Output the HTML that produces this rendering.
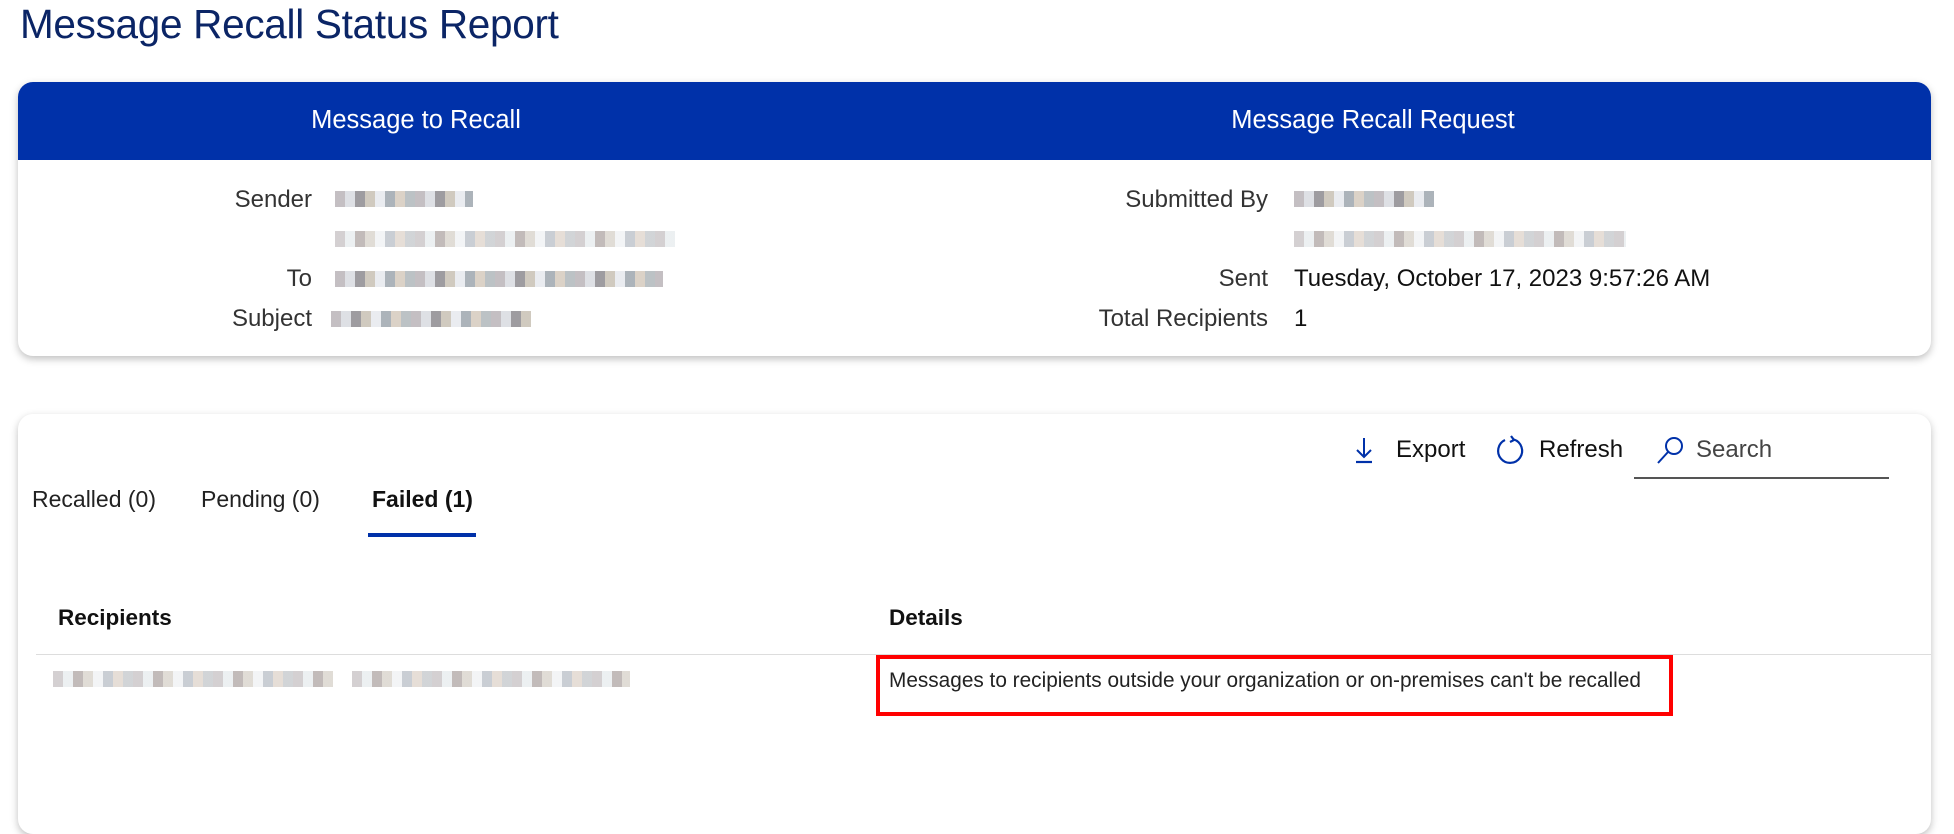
<!DOCTYPE html>
<html><head><meta charset="utf-8">
<style>
*{box-sizing:border-box;margin:0;padding:0}
body{width:1954px;height:778px;overflow:hidden;background:#fff;font-family:"Liberation Sans",sans-serif;position:relative;color:#222}
.abs{position:absolute;white-space:nowrap}
h1{position:absolute;left:20px;top:1px;font-size:40.5px;font-weight:normal;color:#0b2566;letter-spacing:-0.3px}
.card{position:absolute;left:18px;width:1913px;background:#fff;border-radius:15px;box-shadow:0 3px 8px rgba(0,0,0,.25)}
.c1{top:82px;height:274px;overflow:hidden}
.hdr{position:absolute;left:0;top:0;width:100%;height:78px;background:#0031a9}
.hdr span{position:absolute;top:24px;font-size:25.5px;color:#fff;transform:translateX(-50%)}
.lbl{position:absolute;font-size:24px;color:#333;text-align:right}
.val{position:absolute;font-size:24px;color:#111}
.blur{position:absolute;height:16px;background:repeating-linear-gradient(90deg,#b9b4b8 0 10px,#d8dbe0 10px 20px,#8d8a8f 20px 30px,#c8c0b4 30px 40px,#e6e9ee 40px 50px,#9ea6ae 50px 60px,#d5cabd 60px 70px,#b0b7bb 70px 80px);opacity:.85}
.blur.b2{background:repeating-linear-gradient(90deg,#c9c4c6 0 10px,#e8ecee 10px 20px,#b3aaa8 20px 30px,#d9d4cc 30px 40px,#f0f2f4 40px 50px,#bcc2c9 50px 60px,#e0d6cd 60px 70px,#c6cacd 70px 80px);opacity:.8}
.c2{top:414px;height:420px}
.tb{position:absolute;font-size:24px;color:#111}
.tab{position:absolute;top:486px;font-size:23px;color:#222}
</style></head><body>
<h1>Message Recall Status Report</h1>

<div class="card c1">
  <div class="hdr"><span style="left:398px">Message to Recall</span><span style="left:1355px">Message Recall Request</span></div>
</div>
<div class="lbl abs" style="left:150px;width:162px;top:186px">Sender</div>
<div class="blur" style="left:335px;top:191px;width:138px"></div>
<div class="blur b2" style="left:335px;top:231px;width:340px"></div>
<div class="lbl abs" style="left:150px;width:162px;top:265px">To</div>
<div class="blur" style="left:335px;top:271px;width:328px"></div>
<div class="lbl abs" style="left:150px;width:162px;top:305px">Subject</div>
<div class="blur" style="left:331px;top:311px;width:200px"></div>

<div class="lbl abs" style="left:1000px;width:268px;top:186px">Submitted By</div>
<div class="blur" style="left:1294px;top:191px;width:140px"></div>
<div class="blur b2" style="left:1294px;top:231px;width:332px"></div>
<div class="lbl abs" style="left:1000px;width:268px;top:265px">Sent</div>
<div class="val abs" style="left:1294px;top:265px">Tuesday, October 17, 2023 9:57:26 AM</div>
<div class="lbl abs" style="left:1000px;width:268px;top:305px">Total Recipients</div>
<div class="val abs" style="left:1294px;top:305px">1</div>

<div class="card c2"></div>
<svg class="abs" style="left:1354px;top:437px" width="20" height="27" viewBox="0 0 20 27"><path d="M10 1V20M3 13l7 7 7-7" fill="none" stroke="#0031a9" stroke-width="2"/><path d="M2 25h16" stroke="#0031a9" stroke-width="2.2"/></svg>
<div class="tb abs" style="left:1396px;top:436px">Export</div>
<svg class="abs" style="left:1494px;top:435px" width="32" height="32" viewBox="0 0 32 32"><path d="M11 5A12 12 0 1 0 20 4.5" fill="none" stroke="#0031a9" stroke-width="2.2"/><path d="M17 1l3 4-4 2" fill="none" stroke="#0031a9" stroke-width="2.2"/></svg>
<div class="tb abs" style="left:1539px;top:436px">Refresh</div>
<svg class="abs" style="left:1655px;top:435px" width="30" height="30" viewBox="0 0 30 30"><circle cx="19" cy="11" r="8" fill="none" stroke="#0031a9" stroke-width="2"/><path d="M13 17L3 28" stroke="#0031a9" stroke-width="2"/></svg>
<div class="tb abs" style="left:1696px;top:436px;color:#444">Search</div>
<div class="abs" style="left:1634px;top:477px;width:255px;height:2px;background:#555"></div>

<div class="tab abs" style="left:32px">Recalled (0)</div>
<div class="tab abs" style="left:201px">Pending (0)</div>
<div class="tab abs" style="left:372px;font-weight:bold;color:#111">Failed (1)</div>
<div class="abs" style="left:368px;top:533px;width:108px;height:4px;background:#0031a9"></div>

<div class="abs" style="left:58px;top:605px;font-size:22.5px;font-weight:bold;color:#111">Recipients</div>
<div class="abs" style="left:889px;top:605px;font-size:22.5px;font-weight:bold;color:#111">Details</div>
<div class="abs" style="left:36px;top:654px;width:1895px;height:1px;background:#ddd"></div>
<div class="blur b2" style="left:53px;top:671px;width:280px"></div>
<div class="blur b2" style="left:352px;top:671px;width:278px"></div>
<div class="abs" style="left:876px;top:655px;width:797px;height:61px;border:4px solid #f00"></div>
<div class="abs" style="left:889px;top:669px;font-size:20.8px;color:#222">Messages to recipients outside your organization or on-premises can't be recalled</div>
</body></html>
